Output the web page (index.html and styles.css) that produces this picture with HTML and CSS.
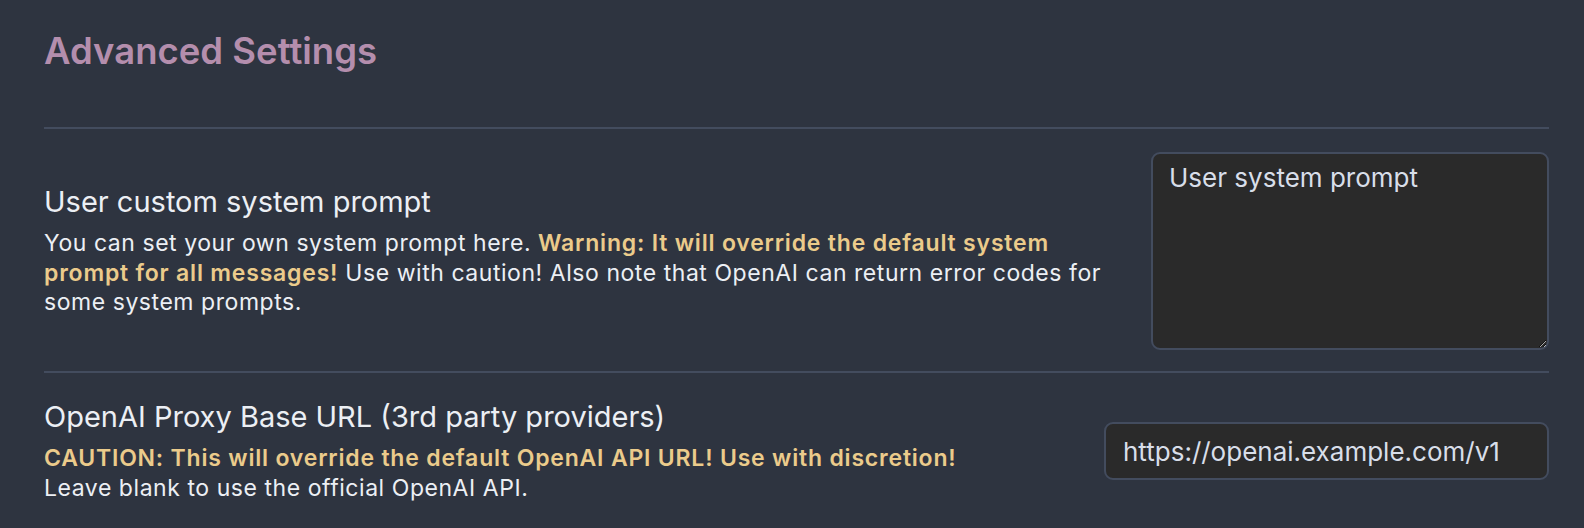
FILE: index.html
```html
<!DOCTYPE html>
<html lang="en">
<head>
	<meta charset="UTF-8">
	<title>Advanced Settings</title>
	<link rel="stylesheet" href="styles.css">
</head>
<body>
	<div id="main">
		<h2>Advanced Settings</h2>
		<div class="row">
			<div class="info">
				<h4>User custom system prompt</h4>
				<p>You can set your own system prompt here. <strong>Warning: It will override the default system prompt for all messages!</strong> Use with caution! Also note that OpenAI can return error codes for some system prompts.</p>
			</div>
			<textarea class="prompt" placeholder="User system prompt"></textarea>
		</div>
		<div class="row url-row">
			<div class="info">
				<h4>OpenAI Proxy Base URL (3rd party providers)</h4>
				<p><strong>CAUTION: This will override the default OpenAI API URL! Use with discretion!</strong><br>Leave blank to use the official OpenAI API.</p>
			</div>
			<input type="text" class="url" placeholder="https://openai.example.com/v1">
		</div>
	</div>
</body>
</html>
```

FILE: styles.css
```css
h2,h4,p {
	padding: 0;
	margin: 0;
}

html, body {
	background: #2e3440;
}

body {
	margin: 0;
	font-family: Inter, "Liberation Sans", sans-serif;
	color: #eceff4;
}

#main {
	padding: 24px 35px 0 44px;
}

h2 {
	line-height: 54px;
	padding-bottom: 49px;
	font-size: 36.5px;
	font-weight: 600;
	color: #b48ead;
	border-bottom: 2px solid #434c5e;
}

.row {
	display: flex;
	align-items: center;
	gap: 46px;
	padding: 23px 0 21px;
	border-bottom: 2px solid #434c5e;
}

.row:last-child {
	border-bottom: 0;
}

.url-row {
	padding-top: 26px;
}

.info {
	flex: 1;
}

.info h4 {
	font-size: 29px;
	font-weight: 400;
	line-height: 36px;
	margin-bottom: 9px;
}

.info p {
	font-size: 23px;
	line-height: 29.5px;
	letter-spacing: 0.55px;
}

.info strong {
	color: #ebcb8b;
	font-weight: 600;
	letter-spacing: 0.8px;
}

.prompt, .url {
	box-sizing: border-box;
	background: #2a2a2a;
	border: 2px solid #434c5e;
	border-radius: 9px;
	color: #d8dee9;
	font-family: Inter, "Liberation Sans", sans-serif;
	font-size: 26px;
	outline: none;
}

.prompt::placeholder, .url::placeholder {
	color: #d8dee9;
	opacity: 1;
}

.prompt {
	width: 398px;
	height: 198px;
	padding: 6px 16px;
	line-height: 36px;
}

.url {
	width: 445px;
	height: 58px;
	padding: 0 17px;
}
```
